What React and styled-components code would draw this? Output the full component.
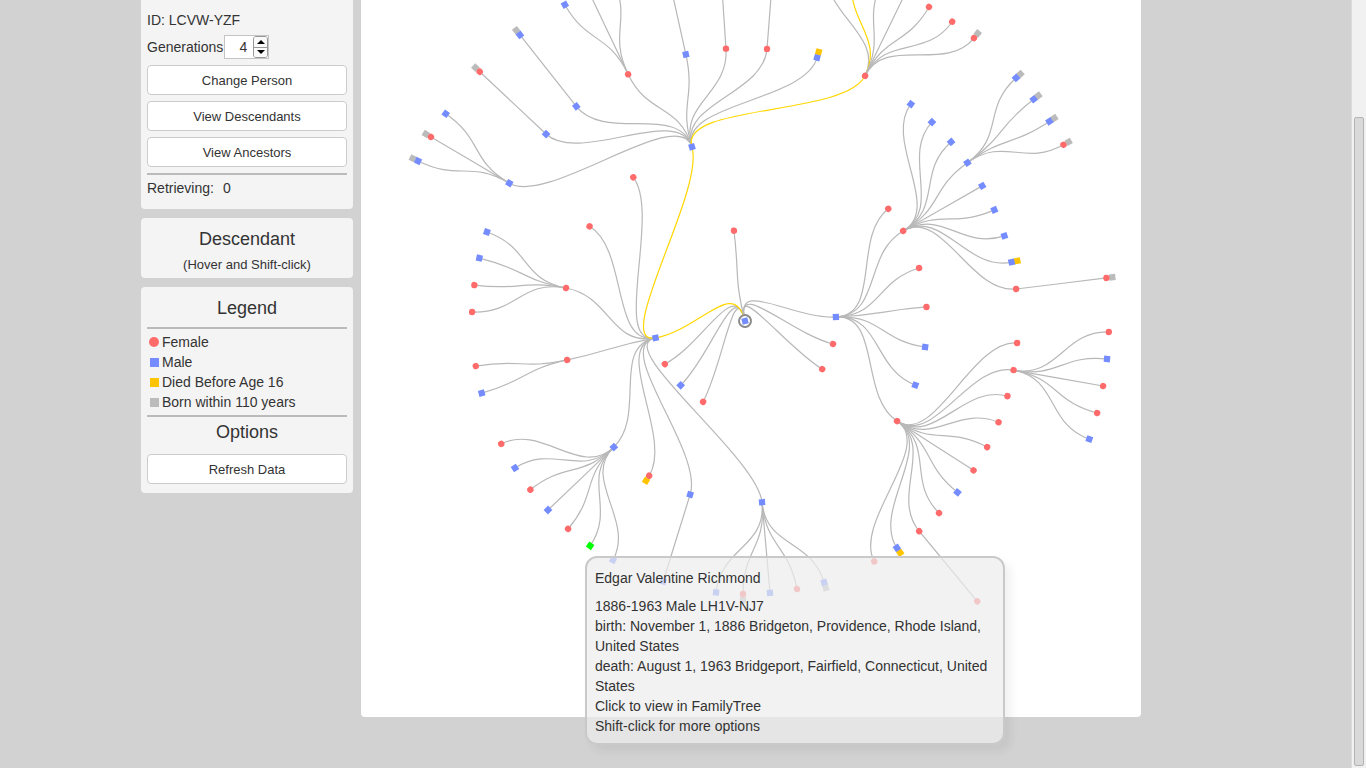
import { useState } from 'react';
import styled, { createGlobalStyle } from 'styled-components';

const COLORS = {
  female: '#ff6b6b',
  male: '#748cff',
  young: '#ffc400',
  living: '#bbb',
  hover: '#00ff00',
};

const CENTER = { x: 745, y: 321 };
const RING = 91;
const ROOT_ANGLE = -14;

const f = (x, y, children, extra) => ({ sex: 'female', x, y, children, ...extra });
const m = (x, y, children, extra) => ({ sex: 'male', x, y, children, ...extra });
const living = { mark: 'living' };
const young = { mark: 'young' };
const onPath = { onPath: true };

const family = m(745, 321, [
  m(836, 317, [
    f(888, 209),
    f(903, 231, [
      m(911, 104),
      m(932, 122),
      m(951, 142),
      m(967, 163, [
        m(1016, 78, [], living),
        m(1034, 99, [], living),
        m(1050, 121, [], living),
        f(1063, 145, [], living),
      ]),
      m(982, 186),
      m(994, 210),
      m(1004, 236),
      m(1012, 262, [], young),
      f(1016, 289, [f(1106, 278, [], living)]),
    ]),
    f(919, 268),
    f(926, 307),
    m(925, 347),
    m(915, 385),
    f(897, 421, [
      f(1017, 343),
      f(1013, 370, [
        f(1109, 332),
        m(1107, 359),
        f(1103, 386),
        f(1097, 413),
        m(1089, 439),
      ]),
      f(1007, 396),
      f(998, 422),
      f(987, 447),
      f(973, 470),
      m(957, 492),
      f(939, 513),
      f(919, 531, [f(977, 601)]),
      m(897, 548, [], young),
      f(874, 561),
    ]),
  ]),
  f(833, 344),
  f(822, 369),
  f(703, 402),
  m(681, 385),
  f(665, 364),
  m(
    655,
    338,
    [
      m(762, 502, [
        m(824, 582, [], living),
        f(797, 589),
        m(770, 593),
        f(743, 594, [], living),
        m(716, 593),
      ]),
      m(690, 495, [m(663, 582)]),
      f(649, 476, [], young),
      m(614, 447, [
        m(613, 560),
        m(590, 546, [], { hovered: true }),
        f(568, 529),
        m(548, 510),
        f(530, 490),
        m(515, 468),
        f(501, 444),
      ]),
      f(567, 360, [m(482, 393), f(476, 366)]),
      f(566, 288, [f(472, 312), f(474, 285), m(479, 258), m(487, 232)]),
      f(589, 226),
      f(633, 177),
      m(
        692,
        147,
        [
          m(509, 183, [m(418, 161, [], living), f(431, 137, [], living), m(446, 114)]),
          m(546, 134, [f(480, 72, [], living)]),
          m(576, 106, [m(520, 35, [], living)]),
          f(628, 74, [m(565, 5), m(589, -8), m(614, -20)]),
          m(686, 55, [m(666, -35)]),
          f(726, 49, [m(720, -42)]),
          f(767, 49, [m(774, -42)]),
          m(817, 58, [], young),
          f(
            865,
            76,
            [
              m(828, -34),
              m(855, -27, [], onPath),
              m(881, -18),
              m(905, -6),
              f(929, 7),
              f(952, 22),
              f(974, 38, [], living),
            ],
            onPath
          ),
        ],
        onPath
      ),
    ],
    onPath
  ),
  f(734, 231),
]);

function project(angle, radius) {
  const a = (angle * Math.PI) / 180;
  return [Math.sin(a) * radius, -Math.cos(a) * radius];
}

function layout(person, depth = 0, parent = null, out = { nodes: [], links: [] }) {
  const dx = person.x - CENTER.x;
  const dy = person.y - CENTER.y;
  const angle = depth ? (Math.atan2(dx, -dy) * 180) / Math.PI : ROOT_ANGLE;
  const node = { ...person, angle, radius: depth * RING, depth };
  out.nodes.push(node);
  if (parent) out.links.push({ source: parent, target: node });
  (person.children || []).forEach((child) => layout(child, depth + 1, node, out));
  return out;
}

function diagonal({ source, target }) {
  const mid = (source.radius + target.radius) / 2;
  return `M${project(source.angle, source.radius)}C${project(source.angle, mid)} ${project(
    target.angle,
    mid
  )} ${project(target.angle, target.radius)}`;
}

const { nodes, links } = layout(family);

function Person({ person }) {
  const fill = person.hovered ? COLORS.hover : COLORS[person.sex];
  return (
    <g transform={`rotate(${person.angle}) translate(0 ${-person.radius})`}>
      {person.mark && (
        <rect x="-3.1" y="-9" width="6.2" height="6.2" fill={COLORS[person.mark]} />
      )}
      {person.depth === 0 && <RootRing r="6" />}
      {person.sex === 'female' ? (
        <circle r="3.2" fill={fill} />
      ) : (
        <rect x="-3.1" y="-3.1" width="6.2" height="6.2" fill={fill} />
      )}
    </g>
  );
}

function FanChart() {
  return (
    <Chart viewBox="361 0 780 717" role="img" aria-label="Descendants">
      <g transform={`translate(${CENTER.x} ${CENTER.y})`}>
        {links.map((link, i) => (
          <Link key={i} d={diagonal(link)} $active={link.target.onPath} />
        ))}
        {nodes.map((person, i) => (
          <Person key={i} person={person} />
        ))}
      </g>
    </Chart>
  );
}

function Generations() {
  const [value, setValue] = useState(4);
  return (
    <Field>
      <label htmlFor="generations">Generations</label>
      <NumberBox>
        <NumberInput
          id="generations"
          type="number"
          min="1"
          value={value}
          onChange={(e) => setValue(Number(e.target.value))}
        />
        <Stepper>
          <Step type="button" aria-label="More" onClick={() => setValue(value + 1)}>
            <svg width="8" height="4" viewBox="0 0 8 4">
              <path d="M0 4L4 0L8 4Z" />
            </svg>
          </Step>
          <Step type="button" aria-label="Fewer" onClick={() => setValue(Math.max(1, value - 1))}>
            <svg width="8" height="4" viewBox="0 0 8 4">
              <path d="M0 0L4 4L8 0Z" />
            </svg>
          </Step>
        </Stepper>
      </NumberBox>
    </Field>
  );
}

export default function App() {
  return (
    <>
      <GlobalStyle />
      <Window>
        <Page>
          <Container>
            <Sidebar>
              <Panel $first>
                <Line>ID: LCVW-YZF</Line>
                <Generations />
                <Buttons>
                  <Button type="button">Change Person</Button>
                  <Button type="button">View Descendants</Button>
                  <Button type="button">View Ancestors</Button>
                </Buttons>
                <Rule />
                <Status>
                  <span>Retrieving:</span>
                  <span>0</span>
                </Status>
              </Panel>
              <Panel>
                <Title>Descendant</Title>
                <Hint>(Hover and Shift-click)</Hint>
              </Panel>
              <Panel>
                <Title>Legend</Title>
                <Rule />
                <Legend>
                  <LegendItem>
                    <Dot $color={COLORS.female} />
                    Female
                  </LegendItem>
                  <LegendItem>
                    <Square $color={COLORS.male} />
                    Male
                  </LegendItem>
                  <LegendItem>
                    <Square $color={COLORS.young} />
                    Died Before Age 16
                  </LegendItem>
                  <LegendItem>
                    <Square $color={COLORS.living} />
                    Born within 110 years
                  </LegendItem>
                </Legend>
                <Rule />
                <Title $tight>Options</Title>
                <Buttons>
                  <Button type="button">Refresh Data</Button>
                </Buttons>
              </Panel>
            </Sidebar>
            <Canvas>
              <FanChart />
              <Tooltip role="tooltip">
                <Name>Edgar Valentine Richmond</Name>
                <div>1886-1963 Male LH1V-NJ7</div>
                <div>birth: November 1, 1886 Bridgeton, Providence, Rhode Island, United States</div>
                <div>death: August 1, 1963 Bridgeport, Fairfield, Connecticut, United States</div>
                <div>Click to view in FamilyTree</div>
                <div>Shift-click for more options</div>
              </Tooltip>
            </Canvas>
          </Container>
        </Page>
        <ScrollTrack aria-hidden="true">
          <ScrollThumb />
        </ScrollTrack>
      </Window>
    </>
  );
}

const GlobalStyle = createGlobalStyle`
  *, *::before, *::after {
    box-sizing: border-box;
  }

  body {
    margin: 0;
    background: #d2d2d2;
    color: #333;
    font: 14px/20px 'Liberation Sans', Arial, sans-serif;
  }

  button, input {
    font: inherit;
    color: inherit;
  }
`;

const Window = styled.div`
  display: flex;
  height: 100vh;
`;

const Page = styled.main`
  flex: 1;
  min-width: 0;
  overflow: hidden;
`;

const Container = styled.div`
  display: flex;
  align-items: flex-start;
  gap: 8px;
  max-width: 1099px;
  margin: 0 auto;
  padding: 0 15px;
`;

const Sidebar = styled.aside`
  display: flex;
  flex-direction: column;
  flex: none;
  gap: 9px;
  width: 212px;
`;

const Panel = styled.section`
  padding: ${(p) => (p.$first ? '10px 6px 11px' : '9px 6px')};
  background: #f4f4f4;
  border-radius: ${(p) => (p.$first ? '0 0 4px 4px' : '4px')};

  &:nth-child(2) {
    padding-bottom: 3px;
  }
`;

const Line = styled.div`
  line-height: 20px;
`;

const Field = styled.div`
  display: flex;
  align-items: center;
  gap: 1px;
  margin: 5px 0 6px;
`;

const NumberBox = styled.div`
  display: flex;
  width: 45px;
  height: 24px;
  background: white;
  border: 1px solid #c4c4c4;
`;

const NumberInput = styled.input`
  flex: 1;
  min-width: 0;
  padding: 0 6px 0 0;
  border: 0;
  background: none;
  text-align: right;
  appearance: textfield;

  &::-webkit-inner-spin-button {
    appearance: none;
    margin: 0;
  }
`;

const Stepper = styled.div`
  display: flex;
  flex-direction: column;
  width: 15px;
  border: 1px solid #999;
  border-radius: 3px;
  overflow: hidden;
`;

const Step = styled.button`
  display: grid;
  place-content: center;
  flex: 1;
  padding: 0;
  border: 0;
  background: #fafafa;

  & + & {
    border-top: 1px solid #999;
  }
`;

const Buttons = styled.div`
  display: grid;
  gap: 6px;
`;

const Button = styled.button`
  height: 30px;
  padding: 2px 0 0;
  border: 1px solid #ccc;
  border-radius: 4px;
  background: white;
  font-size: 13px;
  line-height: 20px;
  cursor: pointer;
`;

const Rule = styled.hr`
  height: 2px;
  margin: 6px 0 3px;
  border: 0;
  background: #bbb;
`;

const Status = styled.div`
  display: flex;
  gap: 9px;
`;

const Title = styled.h2`
  margin: ${(p) => (p.$tight ? '0 0 10px' : '0')};
  font-size: 18px;
  font-weight: 400;
  line-height: 24px;
  text-align: center;

  & + ${Rule} {
    margin-top: 7px;
  }
`;

const Hint = styled.div`
  margin-top: 4px;
  font-size: 13px;
  line-height: 20px;
  text-align: center;
`;

const Legend = styled.ul`
  margin: 0;
  padding: 0 2px;
  list-style: none;

  & + ${Rule} {
    margin-top: 3px;
  }
`;

const LegendItem = styled.li`
  display: flex;
  align-items: center;
  gap: 3px;
`;

const Dot = styled.span`
  width: 10px;
  height: 10px;
  border-radius: 50%;
  background: ${(p) => p.$color};
`;

const Square = styled.span`
  width: 9px;
  height: 9px;
  margin-left: 1px;
  background: ${(p) => p.$color};
`;

const Canvas = styled.section`
  position: relative;
  flex: 0 1 780px;
  min-width: 0;
  background: white;
  border-radius: 0 0 4px 4px;
`;

const Chart = styled.svg`
  display: block;
  width: 100%;
`;

const Link = styled.path`
  fill: none;
  stroke: ${(p) => (p.$active ? '#ffd700' : '#b8b8b8')};
  stroke-width: 1.2;
`;

const RootRing = styled.circle`
  fill: white;
  stroke: #8c8c8c;
  stroke-width: 2;
`;

const Tooltip = styled.div`
  position: absolute;
  top: 556px;
  left: 224px;
  width: 420px;
  padding: 10px 8px 7px;
  border: 2px solid #c9c9c9;
  border-radius: 12px;
  background: rgba(237, 237, 237, 0.71);
  box-shadow: 6px 6px 10px rgba(0, 0, 0, 0.06);
`;

const Name = styled.div`
  margin-bottom: 8px;
`;

const ScrollTrack = styled.div`
  flex: none;
  width: 15px;
  padding: 117px 2px 2px;
  background: #f1f1f1;
  border-left: 1px solid #dcdcdc;
`;

const ScrollThumb = styled.div`
  height: 100%;
  background: #d9d9d9;
  border: 1px solid #b4b4b4;
  border-radius: 2px;
`;
